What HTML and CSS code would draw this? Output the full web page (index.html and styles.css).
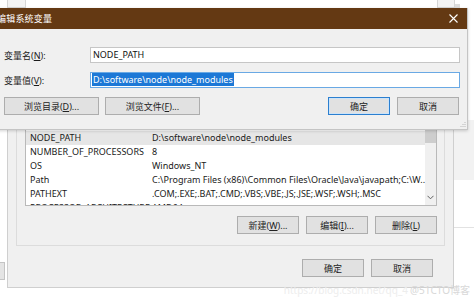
FILE: index.html
```html
<!DOCTYPE html>
<html lang="zh-CN">
<head>
    <meta charset="UTF-8">
    <title>编辑系统变量</title>
    <link rel="stylesheet" href="styles.css">
</head>
<body>
    <div class="desktop">
        <!-- bits of other windows peeking out -->
        <div class="peek peek-tl"></div>
        <div class="peek peek-tr"></div>
        <div class="peek peek-tr-dot"></div>
        <div class="peek peek-bl"></div>
        <div class="peek peek-right"></div>

        <!-- the environment variables window behind -->
        <div class="win back-win">
            <div class="group">
                <div class="listbox">
                    <div class="rows">
                        <div class="row"><span class="col-name">DriverData</span><span>C:\Windows\System32\Drivers\DriverData</span></div>
                        <div class="row"><span class="col-name">JAVA_HOME</span><span>C:\Program Files\Java\jdk1.8.0_181</span></div>
                        <div class="row selected"><span class="col-name">NODE_PATH</span><span>D:\software\node\node_modules</span></div>
                        <div class="row"><span class="col-name">NUMBER_OF_PROCESSORS</span><span>8</span></div>
                        <div class="row"><span class="col-name">OS</span><span>Windows_NT</span></div>
                        <div class="row"><span class="col-name">Path</span><span>C:\Program Files (x86)\Common Files\Oracle\Java\javapath;C:\W...</span></div>
                        <div class="row"><span class="col-name">PATHEXT</span><span>.COM;.EXE;.BAT;.CMD;.VBS;.VBE;.JS;.JSE;.WSF;.WSH;.MSC</span></div>
                        <div class="row"><span class="col-name">PROCESSOR_ARCHITECTURE</span><span>AMD64</span></div>
                    </div>
                    <div class="scrollbar">
                        <div class="thumb"></div>
                        <svg class="arrow-down" width="7" height="5" viewBox="0 0 7 5"><path d="M0.5 0.8 L3.5 3.8 L6.5 0.8" fill="none" stroke="#606060" stroke-width="1"/></svg>
                    </div>
                </div>
                <div class="btn-row">
                    <button class="btn">新建(<u>W</u>)...</button>
                    <button class="btn">编辑(<u>I</u>)...</button>
                    <button class="btn">删除(<u>L</u>)</button>
                </div>
            </div>
            <div class="btn-row footer">
                <button class="btn">确定</button>
                <button class="btn">取消</button>
            </div>
        </div>

        <!-- the edit dialog in front -->
        <div class="win front-win">
            <div class="titlebar">
                <span class="title">编辑系统变量</span>
                <svg class="close" width="9" height="9" viewBox="0 0 9 9"><path d="M0.5 0.5 L8.5 8.5 M8.5 0.5 L0.5 8.5" stroke="#fff" stroke-width="1.1"/></svg>
            </div>
            <div class="dialog-body">
                <div class="field">
                    <label class="field-label">变量名(<u>N</u>):</label>
                    <div class="input">NODE_PATH</div>
                </div>
                <div class="field">
                    <label class="field-label">变量值(<u>V</u>):</label>
                    <div class="input focused"><span class="sel">D:\software\node\node_modules</span></div>
                </div>
                <div class="btn-row dialog-btns">
                    <button class="btn wide">浏览目录(<u>D</u>)...</button>
                    <button class="btn wide">浏览文件(<u>F</u>)...</button>
                    <span class="spacer"></span>
                    <button class="btn default">确定</button>
                    <button class="btn">取消</button>
                </div>
                <svg class="grip" width="6" height="6" viewBox="0 0 6 6"><path d="M5 1v1M3 3v1M5 3v1M1 5v1M3 5v1M5 5v1" stroke="#b8b8b8" stroke-width="1"/></svg>
            </div>
        </div>

        <div class="watermark"><span class="wm-url">https://blog.csdn.net/qq_4</span>@51CTO博客</div>
    </div>
</body>
</html>
```

FILE: styles.css
```css
* {
    margin: 0;
    padding: 0;
    box-sizing: border-box;
}

body {
    background: #fff;
    font-family: "Segoe UI", "Noto Sans", "Noto Sans CJK SC", sans-serif;
    font-size: 9px;
    color: #111;
    overflow: hidden;
}

.desktop {
    position: relative;
    width: 474px;
    height: 297px;
    overflow: hidden;
}

.peek {
    position: absolute;
    background: #f3f3f3;
    border: 1px solid #d6d6d6;
}

.peek-tl { left: 7px; top: -2px; width: 19px; height: 10px; }
.peek-tr { left: 437px; top: -2px; width: 18px; height: 10px; }
.peek-tr-dot { left: 455px; top: 4px; width: 5px; height: 4px; background: #ddd; border: none; }
.peek-bl { left: -4px; top: 262px; width: 9px; height: 18px; background: #e4e4e4; border-color: #c4c4c4; }
.peek-right {
    left: 454px;
    top: 120px;
    width: 24px;
    height: 108px;
    background: linear-gradient(#f2f2f2 0, #f2f2f2 60px, #fff 60px);
    border: none;
    border-bottom: 1px solid #e2e2e2;
}

.win {
    position: absolute;
    background: #f0f0f0;
}

/* back window */
.back-win {
    left: 7px;
    top: 60px;
    width: 447px;
    height: 228px;
    border: 1px solid #cfcfcf;
    border-top: none;
    display: flex;
    flex-direction: column;
    justify-content: flex-end;
    padding: 0 0 10px 8px;
}

.group {
    margin-right: 8px;
    border: 1px solid #dcdcdc;
    border-top: none;
    padding: 0 7px 11px 8px;
}

.listbox {
    display: flex;
    height: 104px;
    background: #fff;
    border: 1px solid #b9b9b9;
    overflow: hidden;
}

.rows {
    flex: 1;
    min-width: 0;
}

.row {
    display: flex;
    height: 14px;
    line-height: 14px;
    padding-left: 4px;
    white-space: nowrap;
    color: #1a1a1a;
}

.row.selected {
    background: #e6e6e6;
}

.col-name {
    width: 122px;
    flex-shrink: 0;
}

.scrollbar {
    position: relative;
    width: 11px;
    background: #f0f0f0;
}

.thumb {
    margin-top: 27px;
    height: 13px;
    background: #cdcdcd;
}

.arrow-down {
    position: absolute;
    left: 2px;
    bottom: 5px;
}

.btn-row {
    display: flex;
    justify-content: flex-end;
    gap: 7px;
    margin-top: 10px;
}

.footer {
    margin-top: 13px;
    margin-right: 20px;
}

.btn {
    width: 62px;
    height: 18px;
    background: #e1e1e1;
    border: 1px solid #adadad;
    font: inherit;
    color: #222;
    display: flex;
    align-items: center;
    justify-content: center;
}

.btn u {
    text-underline-offset: 1px;
}

.btn.wide {
    width: 95px;
}

.btn.default {
    border: 1px solid #2b7fd0;
    box-shadow: inset 0 0 0 1px #cde3f7;
}

/* front dialog */
.front-win {
    left: -8px;
    top: 8px;
    width: 476px;
    height: 122px;
    border: 1px solid #c4c4c4;
    border-top: none;
    box-shadow: 0 1px 3px rgba(0, 0, 0, 0.18);
}

.titlebar {
    height: 21px;
    background: #643913;
    display: flex;
    align-items: center;
    justify-content: space-between;
    padding: 0 9px 0 4px;
    color: #fff;
}

.title {
    font-size: 9px;
    letter-spacing: 0.2px;
}

.close {
    display: block;
}

.dialog-body {
    position: relative;
    padding: 18px 7px 0 11px;
}

.field {
    display: grid;
    grid-template-columns: 86px 1fr;
    align-items: center;
    margin-bottom: 9px;
}

.field-label {
    color: #1a1a1a;
}

.input {
    height: 16px;
    background: #fff;
    border: 1px solid #c6c6c6;
    line-height: 14px;
    padding-left: 2px;
    white-space: nowrap;
}

.input.focused {
    border-color: #6aa9e4;
    padding-left: 1px;
}

.sel {
    display: inline-block;
    background: #1c78d6;
    color: #fff;
    line-height: 13px;
    padding: 0 1px;
}

.dialog-btns {
    margin-top: 4px;
    gap: 6px;
    justify-content: flex-start;
    padding-right: 1px;
}

.dialog-btns .spacer {
    flex: 1;
}

.dialog-btns .btn.default + .btn {
    margin-left: 1px;
}

.grip {
    position: absolute;
    right: 1px;
    bottom: -12px;
}

.watermark {
    position: absolute;
    right: 4px;
    bottom: 0px;
    font-size: 10px;
    color: #d8d8d8;
    white-space: nowrap;
}

.wm-url {
    color: #ededed;
    margin-right: 2px;
}
```
